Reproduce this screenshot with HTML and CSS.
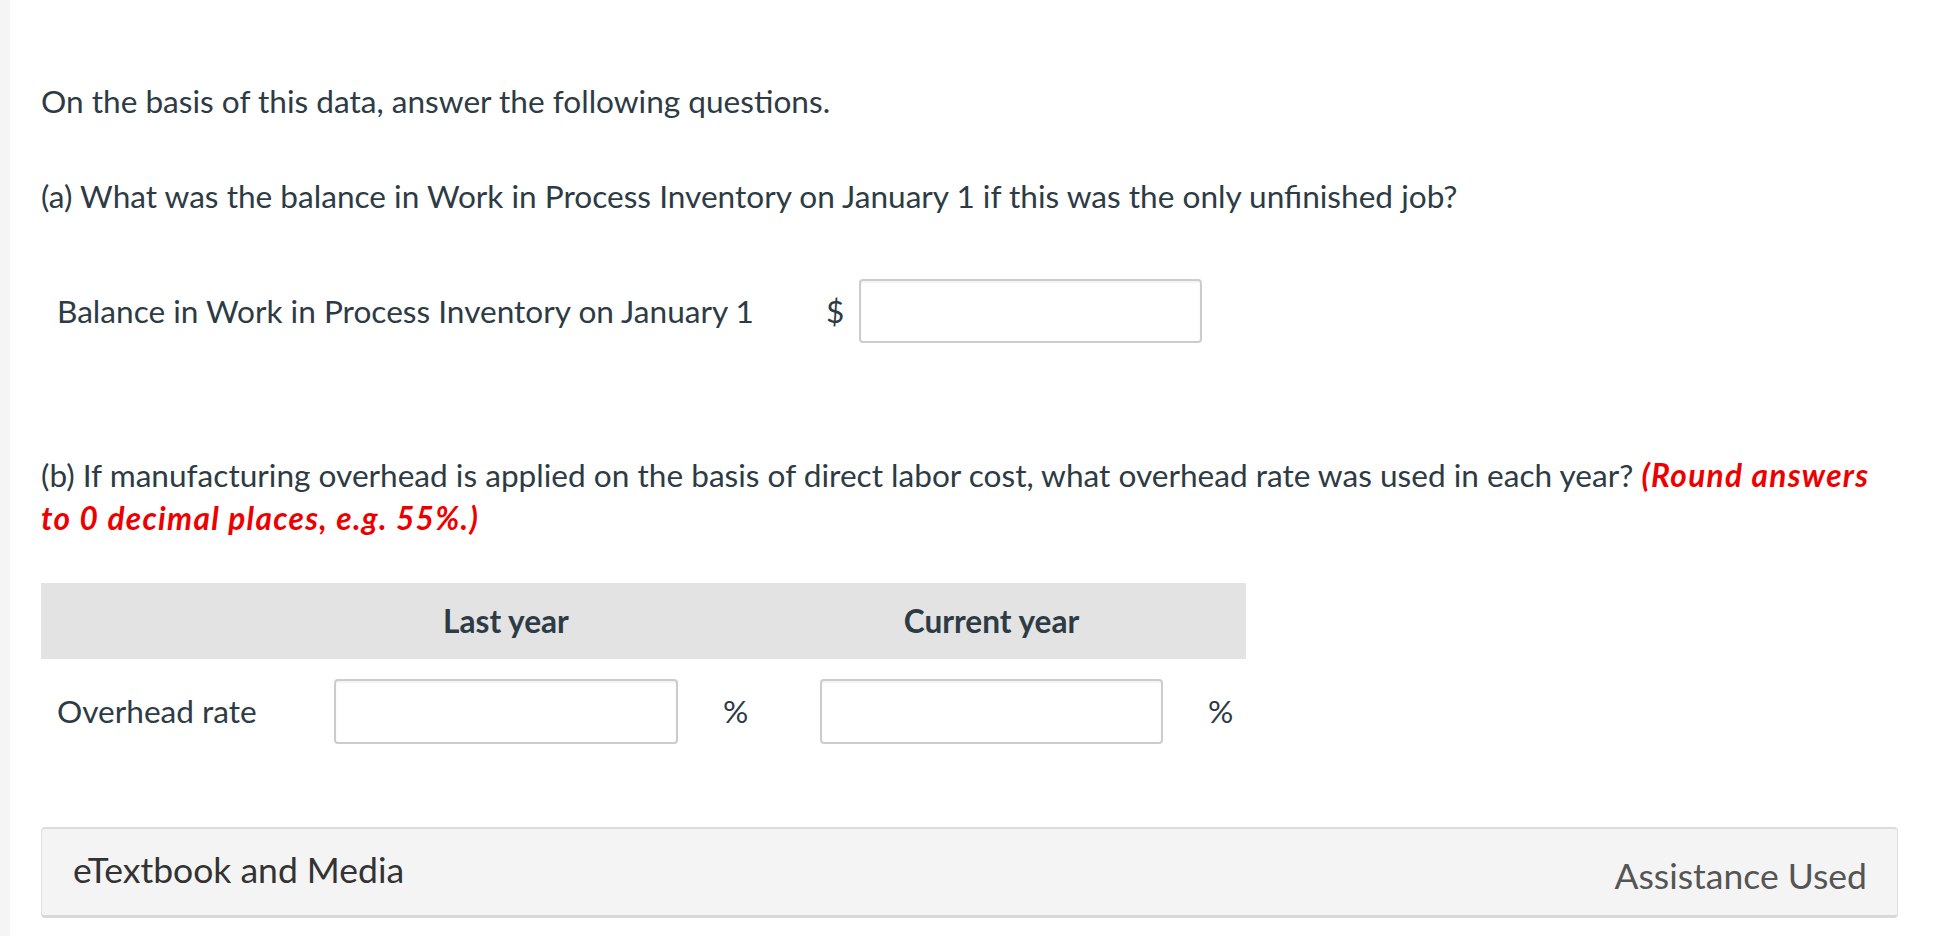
FILE: index.html
```html
<!DOCTYPE html>
<html lang="en">
<head>
<meta charset="utf-8">
<title>Work in Process Inventory</title>
<link rel="stylesheet" href="styles.css">
</head>
<body>
<div class="page">
  <div class="strip"></div>
  <main class="content">
    <p class="para p1">On the basis of this data, answer the following questions.</p>
    <p class="para p2">(a) What was the balance in Work in Process Inventory on January 1 if this was the only unfinished job?</p>

    <div class="balance-row">
      <div class="label">Balance in Work in Process Inventory on January 1</div>
      <div class="unit">$</div>
      <div class="field"></div>
    </div>

    <p class="para p3">(b) If manufacturing overhead is applied on the basis of direct labor cost, what overhead rate was used in each year? <span class="hint">(Round answers to 0 decimal places, e.g. 55%.)</span></p>

    <div class="table">
      <div class="grid head">
        <div></div>
        <div class="th">Last year</div>
        <div></div>
        <div class="th">Current year</div>
        <div></div>
      </div>
      <div class="grid body-row">
        <div class="label">Overhead rate</div>
        <div class="field"></div>
        <div class="pct">%</div>
        <div class="field"></div>
        <div class="pct">%</div>
      </div>
    </div>

    <div class="footer">
      <span class="etext">eTextbook and Media</span>
      <span class="assist">Assistance Used</span>
    </div>
  </main>
</div>
</body>
</html>
```

FILE: styles.css
```css
html, body {
  margin: 0;
  padding: 0;
  background: #ffffff;
}
body {
  font-family: Lato, "Open Sans", "Liberation Sans", sans-serif;
  color: #2d3b45;
  font-size: 31.6px;
  line-height: 43px;
}
.page {
  display: flex;
  min-height: 936px;
}
.strip {
  width: 10px;
  flex: none;
  background: #f5f5f5;
}
.content {
  flex: 1;
  padding: 80px 46px 0 31px;
}
.para {
  margin: 0;
}
.p2 {
  margin-top: 52px;
}
.balance-row {
  display: grid;
  grid-template-columns: 785px 33px 343px;
  align-items: center;
  margin-top: 61px;
}
.label {
  padding-left: 16px;
  white-space: nowrap;
}
.field {
  height: 64px;
  box-sizing: border-box;
  border: 2px solid #cccccc;
  border-radius: 4px;
  background: #ffffff;
  box-shadow: inset 0 2px 2px rgba(0, 0, 0, 0.05);
}
.p3 {
  margin-top: 111px;
  padding-right: 24px;
}
.hint {
  color: #ee0000;
  font-weight: 700;
  font-style: italic;
  letter-spacing: 1.3px;
}
.table {
  margin-top: 43px;
  width: 1205px;
}
.grid {
  display: grid;
  grid-template-columns: 293px 344px 142px 343px 83px;
  align-items: center;
}
.head {
  background: #e3e3e3;
  height: 76px;
}
.th {
  text-align: center;
  font-weight: 700;
}
.body-row {
  margin-top: 20px;
}
.body-row .field {
  height: 65px;
}
.pct {
  padding-left: 45px;
}
.footer {
  margin-top: 83px;
  height: 91px;
  box-sizing: border-box;
  display: flex;
  align-items: center;
  justify-content: space-between;
  padding: 0 30px 0 31px;
  background: #f4f4f4;
  border: 1px solid #e0e0e0;
  border-top: 2px solid #dcdcdc;
  border-bottom: 3px solid #d8d8d8;
  border-radius: 4px;
}
.etext {
  color: #333333;
  font-size: 35.5px;
  margin-top: -6px;
}
.assist {
  color: #555555;
  font-size: 35.5px;
  margin-top: 6px;
}
```
